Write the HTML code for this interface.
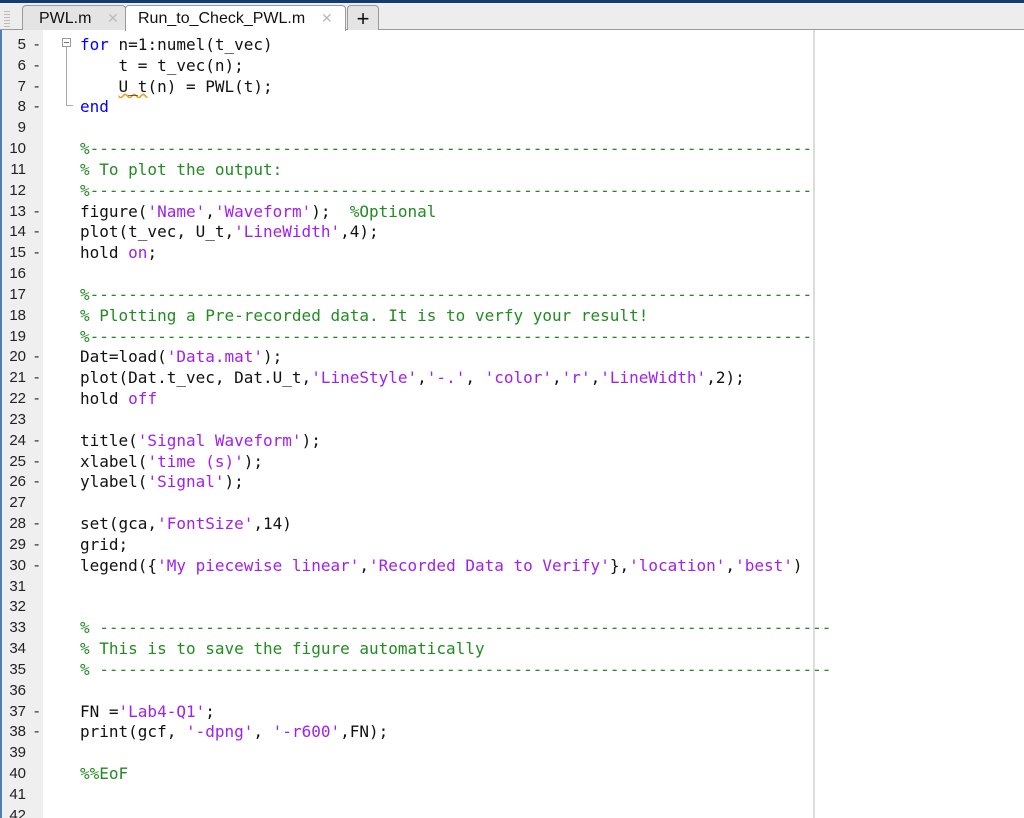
<!DOCTYPE html>
<html><head><meta charset="utf-8"><style>
html,body{margin:0;width:1024px;height:818px;overflow:hidden;}
body{background:#fff;position:relative;font-family:"DejaVu Sans Mono","Liberation Mono",monospace;}
#top{position:absolute;left:0;top:0;width:1024px;height:3px;background:#0e3f6e}
#bar{position:absolute;left:0;top:3px;width:1024px;height:26px;background:#ededed;border-bottom:1px solid #9a9a9a}
.grip{position:absolute;left:4px;top:8px;width:6px;height:16px;background:repeating-linear-gradient(#bbb 0 1px,transparent 1px 3px)}
.tab{position:absolute;top:5px;height:25px;border:1px solid #9a9a9a;border-bottom:none;border-radius:4px 4px 0 0;font-family:"Liberation Sans",sans-serif;font-size:16px;line-height:25px;color:#111;box-sizing:border-box}
.x{position:absolute;color:#bbb;font-size:14px}
#gut{position:absolute;left:0;top:30px;width:43px;height:788px;background:#efefef;border-left:2px solid #4f7fb0;box-sizing:border-box}
#rl{position:absolute;left:813px;top:30px;width:2px;height:788px;background:#dcdcdc}
#code{position:absolute;left:0;top:35px;font-size:16px;color:#111}
#code div{height:20.83px;line-height:20.83px;white-space:pre;overflow:visible}
.ln{display:inline-block;width:26px;text-align:right;font-family:"Liberation Sans",sans-serif;font-size:15px;color:#222;line-height:20px;vertical-align:top}
.d{display:inline-block;width:54px;padding-left:8px;box-sizing:border-box;font-family:"Liberation Sans",sans-serif;color:#333;line-height:20px;vertical-align:top}
.c{color:#228b22}.s{color:#a020f0}.k{color:#0000ff}
#fold{position:absolute;left:62px;top:38px;width:9px;height:9px;border:1px solid #999;box-sizing:border-box}
#fold:after{content:"";position:absolute;left:1px;top:3px;width:5px;height:1px;background:#777}
#fl{position:absolute;left:66px;top:47px;width:6px;height:58px;border-left:1px solid #aaa;border-bottom:1px solid #aaa}
</style></head><body>
<div id="top"></div><div id="bar"><div class="grip"></div></div>
<div class="tab" style="left:22px;width:104px;background:#e4e4e4;padding-left:16px">PWL.m<span class="x" style="left:84px">✕</span></div>
<div class="tab" style="left:125px;width:221px;height:26px;background:#fff;padding-left:12px">Run_to_Check_PWL.m<span class="x" style="left:195px">✕</span></div>
<div class="tab" style="left:347px;width:32px;background:#e4e4e4;text-align:center;font-size:22px">+</div>
<div id="gut"></div><div id="rl"></div>
<div id="fold"></div><div id="fl"></div>
<div id="code">
<div><span class="ln">5</span><span class="d">-</span><span class="k">for</span> n=1:numel(t_vec)</div>
<div><span class="ln">6</span><span class="d">-</span>    t = t_vec(n);</div>
<div><span class="ln">7</span><span class="d">-</span>    <span style="text-decoration:underline wavy #e8a020">U_t</span>(n) = PWL(t);</div>
<div><span class="ln">8</span><span class="d">-</span><span class="k">end</span></div>
<div><span class="ln">9</span><span class="d"> </span></div>
<div><span class="ln">10</span><span class="d"> </span><span class="c">%---------------------------------------------------------------------------</span></div>
<div><span class="ln">11</span><span class="d"> </span><span class="c">% To plot the output:</span></div>
<div><span class="ln">12</span><span class="d"> </span><span class="c">%---------------------------------------------------------------------------</span></div>
<div><span class="ln">13</span><span class="d">-</span>figure(<span class="s">'Name'</span>,<span class="s">'Waveform'</span>);  <span class="c">%Optional</span></div>
<div><span class="ln">14</span><span class="d">-</span>plot(t_vec, U_t,<span class="s">'LineWidth'</span>,4);</div>
<div><span class="ln">15</span><span class="d">-</span>hold <span class="s">on</span>;</div>
<div><span class="ln">16</span><span class="d"> </span></div>
<div><span class="ln">17</span><span class="d"> </span><span class="c">%---------------------------------------------------------------------------</span></div>
<div><span class="ln">18</span><span class="d"> </span><span class="c">% Plotting a Pre-recorded data. It is to verfy your result!</span></div>
<div><span class="ln">19</span><span class="d"> </span><span class="c">%---------------------------------------------------------------------------</span></div>
<div><span class="ln">20</span><span class="d">-</span>Dat=load(<span class="s">'Data.mat'</span>);</div>
<div><span class="ln">21</span><span class="d">-</span>plot(Dat.t_vec, Dat.U_t,<span class="s">'LineStyle'</span>,<span class="s">'-.'</span>, <span class="s">'color'</span>,<span class="s">'r'</span>,<span class="s">'LineWidth'</span>,2);</div>
<div><span class="ln">22</span><span class="d">-</span>hold <span class="s">off</span></div>
<div><span class="ln">23</span><span class="d"> </span></div>
<div><span class="ln">24</span><span class="d">-</span>title(<span class="s">'Signal Waveform'</span>);</div>
<div><span class="ln">25</span><span class="d">-</span>xlabel(<span class="s">'time (s)'</span>);</div>
<div><span class="ln">26</span><span class="d">-</span>ylabel(<span class="s">'Signal'</span>);</div>
<div><span class="ln">27</span><span class="d"> </span></div>
<div><span class="ln">28</span><span class="d">-</span>set(gca,<span class="s">'FontSize'</span>,14)</div>
<div><span class="ln">29</span><span class="d">-</span>grid;</div>
<div><span class="ln">30</span><span class="d">-</span>legend({<span class="s">'My piecewise linear'</span>,<span class="s">'Recorded Data to Verify'</span>},<span class="s">'location'</span>,<span class="s">'best'</span>)</div>
<div><span class="ln">31</span><span class="d"> </span></div>
<div><span class="ln">32</span><span class="d"> </span></div>
<div><span class="ln">33</span><span class="d"> </span><span class="c">% ----------------------------------------------------------------------------</span></div>
<div><span class="ln">34</span><span class="d"> </span><span class="c">% This is to save the figure automatically</span></div>
<div><span class="ln">35</span><span class="d"> </span><span class="c">% ----------------------------------------------------------------------------</span></div>
<div><span class="ln">36</span><span class="d"> </span></div>
<div><span class="ln">37</span><span class="d">-</span>FN =<span class="s">'Lab4-Q1'</span>;</div>
<div><span class="ln">38</span><span class="d">-</span>print(gcf, <span class="s">'-dpng'</span>, <span class="s">'-r600'</span>,FN);</div>
<div><span class="ln">39</span><span class="d"> </span></div>
<div><span class="ln">40</span><span class="d"> </span><span class="c">%%EoF</span></div>
<div><span class="ln">41</span><span class="d"> </span></div>
<div><span class="ln">42</span><span class="d"> </span></div>
</div>
</body></html>
